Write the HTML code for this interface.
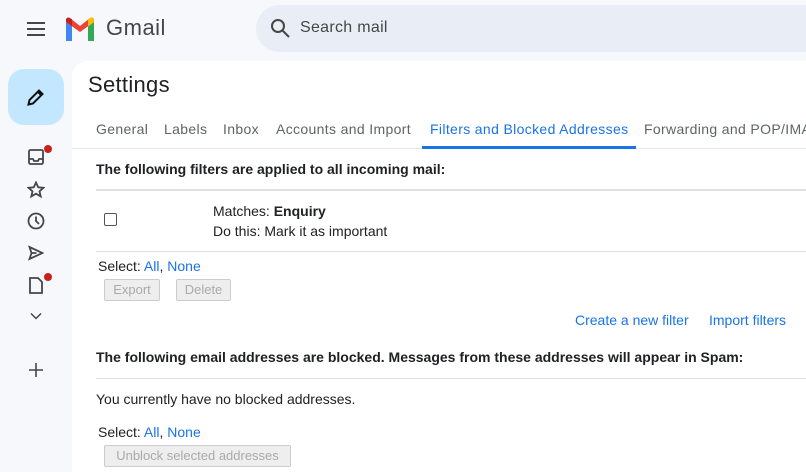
<!DOCTYPE html>
<html><head><style>
*{margin:0;padding:0;box-sizing:border-box}
body{width:806px;height:472px;overflow:hidden;background:#f6f8fc;font-family:"Liberation Sans",Arial,sans-serif;color:#202124;position:relative}
.a{position:absolute;white-space:nowrap}
.main{position:absolute;left:72px;top:61px;width:760px;height:411px;background:#fff;border-radius:16px 0 0 0}
.tab{position:absolute;top:121px;font-size:14px;color:#5f6368;white-space:nowrap;letter-spacing:0.35px}
.b{font-weight:bold;font-size:14px}
.t{font-size:14px;color:#202124}
.lk{color:#1a73e8}
.btn{position:absolute;height:22px;border:1px solid #ccc;background:#eee;color:#aaa;font-size:13px;border-radius:2px;text-align:center;line-height:20px}
.ic{position:absolute;fill:none;stroke:#444746;stroke-width:1.8}
.dot{position:absolute;width:8px;height:8px;border-radius:50%;background:#c5221f}
</style></head><body>
<svg class="ic" style="left:26px;top:20px" width="20" height="18"><path d="M1 3h18M1 9h18M1 15h18" stroke-width="2"/></svg>
<svg class="a" style="left:64px;top:17px" width="32" height="24" viewBox="0 0 32 24">
<path d="M2 24V5l6 4.5V24z" fill="#4285f4"/><path d="M24 24V9.5L30 5v19z" fill="#34a853"/>
<path d="M2 5L16 15 30 5V3c0-2-2-3-4-2L16 9 6 1C4 0 2 1 2 3z" fill="#ea4335"/>
<path d="M24 9.5L30 5V3c0-2-2-3-4-2l-2 1.5z" fill="#fbbc04"/><path d="M2 5l6 4.5V2.3L6 1C4 0 2 1 2 3z" fill="#c5221f"/></svg>
<div class="a" style="left:106px;top:15px;font-size:22px;color:#444746;letter-spacing:0.5px">Gmail</div>
<div class="a" style="left:256px;top:5px;width:600px;height:47px;background:#e9eef6;border-radius:24px"></div>
<svg class="ic" style="left:270px;top:18px" width="22" height="22"><circle cx="8" cy="8" r="6" stroke-width="2"/><path d="M12.5 12.5L19 19" stroke-width="2"/></svg>
<div class="a" style="left:300px;top:19px;font-size:16px;color:#444746;letter-spacing:0.3px">Search mail</div>
<div class="a" style="left:8px;top:69px;width:56px;height:56px;background:#c2e7ff;border-radius:16px"></div>
<svg class="a" style="left:26px;top:87px" width="20" height="20" viewBox="0 0 20 20"><path d="M2.5 17.5l1-4.5L13 3.5l3.5 3.5-9.5 9.5z M12 5l3.5 3.5" fill="none" stroke="#111" stroke-width="2"/></svg>
<svg class="ic" style="left:28px;top:149px" width="16" height="16"><rect x="1" y="1" width="14" height="14" rx="1.5"/><path d="M1 10h4l1 2h4l1-2h4"/></svg>
<div class="dot" style="left:44px;top:145px"></div>
<svg class="ic" style="left:27px;top:181px" width="18" height="18"><path d="M9 1.5l2.2 4.8 5.2.5-3.9 3.5 1.2 5.1L9 12.7l-4.7 2.7 1.2-5.1L1.6 6.8l5.2-.5z"/></svg>
<svg class="ic" style="left:27px;top:212px" width="18" height="18"><circle cx="9" cy="9" r="7.5"/><path d="M9 4.5V9l3 3"/></svg>
<svg class="ic" style="left:28px;top:245px" width="16" height="16"><path d="M1.5 2l13 6-13 6 2-6z M3.5 8h5"/></svg>
<svg class="ic" style="left:29px;top:277px" width="14" height="17"><path d="M1 1h8l4 4v11H1z"/></svg>
<div class="dot" style="left:44px;top:273px"></div>
<svg class="ic" style="left:30px;top:312px" width="12" height="8"><path d="M1 1.5l5 5 5-5" stroke-width="1.5"/></svg>
<svg class="ic" style="left:29px;top:363px" width="14" height="14"><path d="M7 0v14M0 7h14" stroke-width="1.6"/></svg>
<div class="main"></div>
<div class="a" style="left:88px;top:72px;font-size:22px;color:#202124;letter-spacing:0.3px">Settings</div>
<div class="tab" style="left:96px">General</div>
<div class="tab" style="left:164px">Labels</div>
<div class="tab" style="left:223px">Inbox</div>
<div class="tab" style="left:276px">Accounts and Import</div>
<div class="tab" style="left:430px;color:#1a73e8">Filters and Blocked Addresses</div>
<div class="tab" style="left:644px">Forwarding and POP/IMAP</div>
<div class="a" style="left:72px;top:148px;width:734px;height:1px;background:#e3e8ef"></div>
<div class="a" style="left:422px;top:146px;width:214px;height:3px;background:#1a73e8"></div>
<div class="a b" style="left:96px;top:161px">The following filters are applied to all incoming mail:</div>
<div class="a" style="left:96px;top:189px;width:710px;height:2px;background:#e0e0e0"></div>
<div class="a" style="left:104px;top:213px;width:13px;height:13px;border:1px solid #555;border-radius:2px"></div>
<div class="a t" style="left:213px;top:203px">Matches: <b>Enquiry</b></div>
<div class="a t" style="left:213px;top:223px">Do this: Mark it as important</div>
<div class="a" style="left:96px;top:251px;width:710px;height:1px;background:#e0e0e0"></div>
<div class="a t" style="left:98px;top:258px">Select: <span class="lk">All</span>, <span class="lk">None</span></div>
<div class="btn" style="left:104px;top:279px;width:56px">Export</div>
<div class="btn" style="left:176px;top:279px;width:55px">Delete</div>
<div class="a t lk" style="left:575px;top:312px">Create a new filter</div>
<div class="a t lk" style="left:709px;top:312px">Import filters</div>
<div class="a b" style="left:96px;top:349px">The following email addresses are blocked. Messages from these addresses will appear in Spam:</div>
<div class="a" style="left:96px;top:378px;width:710px;height:1px;background:#e0e0e0"></div>
<div class="a t" style="left:96px;top:391px">You currently have no blocked addresses.</div>
<div class="a t" style="left:98px;top:424px">Select: <span class="lk">All</span>, <span class="lk">None</span></div>
<div class="btn" style="left:104px;top:445px;width:187px">Unblock selected addresses</div>
</body></html>
